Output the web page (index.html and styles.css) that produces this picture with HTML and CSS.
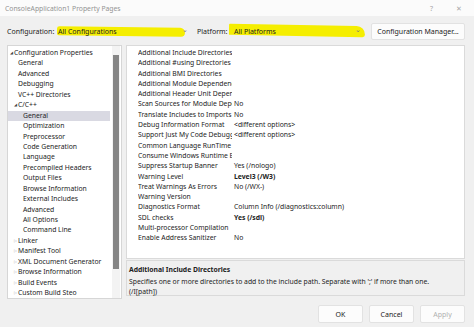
FILE: index.html
```html
<!DOCTYPE html>
<html lang="en">
<head>
    <meta charset="UTF-8">
    <title>ConsoleApplication1 Property Pages</title>
    <link rel="stylesheet" href="styles.css">
</head>
<body>
    <div class="window">
        <div class="titlebar">
            <span class="title">ConsoleApplication1 Property Pages</span>
            <span class="title-btn help">?</span>
            <span class="title-btn close">&#x2715;</span>
        </div>

        <div class="config-row">
            <label class="config-label">Configuration:</label>
            <div class="combo combo-config">
                <span class="marker"></span>
                <span class="combo-text">All Configurations</span>
                <span class="chevron">&#x2304;</span>
            </div>
            <label class="config-label platform-label">Platform:</label>
            <div class="combo combo-platform">
                <span class="marker"></span>
                <span class="combo-text">All Platforms</span>
                <span class="chevron">&#x2304;</span>
            </div>
            <button class="btn manager-btn">Configuration Manager...</button>
        </div>

        <div class="main">
            <div class="tree">
                <ul class="tree-list">
                    <li class="lvl0"><span class="arrow open">&#x25E2;</span>Configuration Properties</li>
                    <li class="lvl1">General</li>
                    <li class="lvl1">Advanced</li>
                    <li class="lvl1">Debugging</li>
                    <li class="lvl1">VC++ Directories</li>
                    <li class="lvl1 parent"><span class="arrow open">&#x25E2;</span>C/C++</li>
                    <li class="lvl2 selected">General</li>
                    <li class="lvl2">Optimization</li>
                    <li class="lvl2">Preprocessor</li>
                    <li class="lvl2">Code Generation</li>
                    <li class="lvl2">Language</li>
                    <li class="lvl2">Precompiled Headers</li>
                    <li class="lvl2">Output Files</li>
                    <li class="lvl2">Browse Information</li>
                    <li class="lvl2">External Includes</li>
                    <li class="lvl2">Advanced</li>
                    <li class="lvl2">All Options</li>
                    <li class="lvl2">Command Line</li>
                    <li class="lvl1 parent"><span class="arrow">&#x25B7;</span>Linker</li>
                    <li class="lvl1 parent"><span class="arrow">&#x25B7;</span>Manifest Tool</li>
                    <li class="lvl1 parent"><span class="arrow">&#x25B7;</span>XML Document Generator</li>
                    <li class="lvl1 parent"><span class="arrow">&#x25B7;</span>Browse Information</li>
                    <li class="lvl1 parent"><span class="arrow">&#x25B7;</span>Build Events</li>
                    <li class="lvl1 parent"><span class="arrow">&#x25B7;</span>Custom Build Steo</li>
                </ul>
                <div class="scrollbar"><div class="thumb"></div></div>
            </div>

            <div class="right">
                <div class="grid">
                    <div class="row"><span class="name">Additional Include Directories</span><span class="value"></span></div>
                    <div class="row"><span class="name">Additional #using Directories</span><span class="value"></span></div>
                    <div class="row"><span class="name">Additional BMI Directories</span><span class="value"></span></div>
                    <div class="row"><span class="name">Additional Module Dependencies</span><span class="value"></span></div>
                    <div class="row"><span class="name">Additional Header Unit Dependencies</span><span class="value"></span></div>
                    <div class="row"><span class="name">Scan Sources for Module Dependencies</span><span class="value">No</span></div>
                    <div class="row"><span class="name">Translate Includes to Imports</span><span class="value">No</span></div>
                    <div class="row"><span class="name">Debug Information Format</span><span class="value">&lt;different options&gt;</span></div>
                    <div class="row"><span class="name">Support Just My Code Debugging</span><span class="value">&lt;different options&gt;</span></div>
                    <div class="row"><span class="name">Common Language RunTime Support</span><span class="value"></span></div>
                    <div class="row"><span class="name">Consume Windows Runtime Extension</span><span class="value"></span></div>
                    <div class="row"><span class="name">Suppress Startup Banner</span><span class="value">Yes (/nologo)</span></div>
                    <div class="row"><span class="name">Warning Level</span><span class="value bold">Level3 (/W3)</span></div>
                    <div class="row"><span class="name">Treat Warnings As Errors</span><span class="value">No (/WX-)</span></div>
                    <div class="row"><span class="name">Warning Version</span><span class="value"></span></div>
                    <div class="row"><span class="name">Diagnostics Format</span><span class="value">Column Info (/diagnostics:column)</span></div>
                    <div class="row"><span class="name">SDL checks</span><span class="value bold">Yes (/sdl)</span></div>
                    <div class="row"><span class="name">Multi-processor Compilation</span><span class="value"></span></div>
                    <div class="row"><span class="name">Enable Address Sanitizer</span><span class="value">No</span></div>
                </div>
                <div class="description">
                    <div class="desc-title">Additional Include Directories</div>
                    <div class="desc-text">Specifies one or more directories to add to the include path. Separate with ';' if more than one.</div>
                    <div class="desc-text">(/I[path])</div>
                </div>
            </div>
        </div>

        <div class="footer">
            <button class="btn">OK</button>
            <button class="btn">Cancel</button>
            <button class="btn disabled">Apply</button>
        </div>
    </div>
</body>
</html>
```

FILE: styles.css
```css
body {
    margin: 0;
    padding: 0;
    font-family: 'Noto Sans', 'Open Sans', sans-serif;
    font-size: 6.8px;
    color: #222;
}
.window {
    width: 474px;
    height: 327px;
    background-color: #f0f0f0;
    overflow: hidden;
    display: flex;
    flex-direction: column;
}
.titlebar {
    height: 16px;
    background-color: #fbfbfb;
    display: flex;
    align-items: center;
    padding-left: 5px;
    color: #939393;
    font-size: 6.8px;
}
.title {
    flex: 1;
}
.title-btn {
    width: 27px;
    text-align: center;
    color: #a8a8a8;
    font-size: 7px;
}
.close {
    margin-right: 2px;
}
.config-row {
    height: 28px;
    display: flex;
    align-items: center;
    padding-left: 7px;
    box-sizing: border-box;
    padding-top: 3px;
}
.config-label {
    font-size: 7px;
    width: 49px;
}
.platform-label {
    width: 35px;
    margin-left: 5px;
}
.combo {
    position: relative;
    height: 14px;
    display: flex;
    align-items: center;
    font-size: 7px;
}
.combo-config {
    width: 136px;
}
.combo-platform {
    width: 133px;
}
.combo-text {
    position: relative;
    flex: 1;
    padding-left: 2px;
}
.chevron {
    position: relative;
    color: #777;
    font-size: 7px;
    margin-right: 4px;
    margin-top: -4px;
}
.marker {
    position: absolute;
    background-color: #f5ee00;
    border-radius: 3px 6px 5px 2px;
}
.combo-config .marker {
    left: 1px;
    top: 2px;
    width: 128px;
    height: 9px;
    transform: rotate(0.8deg);
}
.combo-platform .marker {
    left: -3px;
    top: 0;
    width: 136px;
    height: 11px;
    border-radius: 2px 20px 6px 2px;
    transform: rotate(1deg);
}
.btn {
    font-family: 'Noto Sans', 'Open Sans', sans-serif;
    font-size: 7px;
    color: #222;
    background-color: #fcfcfc;
    border: 1px solid #e2e2e2;
    border-radius: 2px;
    padding: 0;
    height: 17px;
}
.manager-btn {
    width: 94px;
    margin-left: 6px;
}
.main {
    display: flex;
    gap: 4px;
    padding: 1px 9px 0 7px;
    height: 254px;
}
.tree {
    width: 113px;
    background-color: #fff;
    border: 1px solid #d6d6d6;
    position: relative;
    overflow: hidden;
}
.tree-list {
    list-style: none;
    margin: 0;
    padding: 2px 0 0;
}
.tree-list li {
    height: 10.45px;
    line-height: 10.45px;
    white-space: nowrap;
    margin-right: 11px;
}
.lvl0 {
    padding-left: 2px;
}
.lvl1 {
    padding-left: 10px;
}
.lvl1.parent {
    padding-left: 6px;
}
.lvl2 {
    padding-left: 15px;
}
.selected {
    background-color: #d9d9e2;
}
.arrow {
    display: inline-block;
    width: 4px;
    font-size: 4px;
    color: #444;
    vertical-align: top;
}
.arrow.open {
    font-size: 3.5px;
}
.parent .arrow {
    color: #999;
}
.parent .arrow.open {
    color: #444;
}
.scrollbar {
    position: absolute;
    right: 1px;
    top: 0;
    bottom: 0;
    width: 8px;
    background-color: #f3f3f3;
}
.thumb {
    margin: 9px 1px 0;
    height: 214px;
    background-color: #858585;
}
.right {
    flex: 1;
    display: flex;
    flex-direction: column;
    gap: 1px;
}
.grid {
    height: 214px;
    background-color: #fff;
    border: 1px solid #dadada;
    padding-top: 2px;
    box-sizing: border-box;
}
.row {
    display: flex;
    height: 10.3px;
    line-height: 10.3px;
    white-space: nowrap;
}
.name {
    width: 94px;
    margin-left: 11px;
    margin-right: 2px;
    overflow: hidden;
}
.value {
    flex: 1;
}
.bold {
    font-weight: bold;
}
.description {
    height: 36px;
    border: 1px solid #dadada;
    box-sizing: border-box;
    padding: 4px 0 0 2px;
}
.desc-title {
    font-weight: bold;
    line-height: 10px;
    margin-bottom: 2px;
}
.desc-text {
    line-height: 9.5px;
}
.footer {
    display: flex;
    justify-content: flex-end;
    gap: 6px;
    padding: 6px 9px 0 0;
}
.footer .btn {
    width: 45px;
    height: 18px;
}
.footer .disabled {
    color: #b0b0b0;
}
```
